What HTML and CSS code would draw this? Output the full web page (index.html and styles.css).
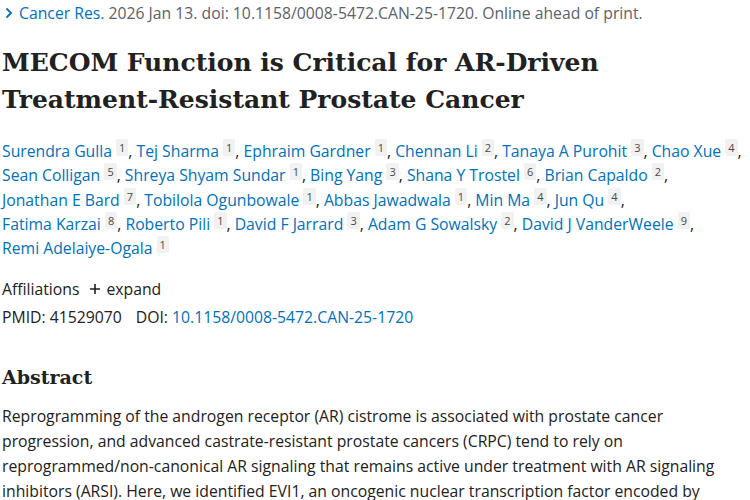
FILE: index.html
```html
<!DOCTYPE html>
<html>
<head>
<meta charset="utf-8">
<link rel="stylesheet" href="styles.css">
</head>
<body>
<main class="article">
  <div class="citation">
    <svg class="chev" width="10" height="12" viewBox="0 0 10 12"><path d="M2.5 1.5 L7 6 L2.5 10.5" fill="none" stroke="#0071bc" stroke-width="1.8"/></svg>
    <a class="journal" href="#">Cancer Res.</a>
    <span class="cit">2026 Jan 13. doi: 10.1158/0008-5472.CAN-25-1720. Online ahead of print.</span>
  </div>
  <h1 class="title">MECOM Function is Critical for AR-Driven Treatment-Resistant Prostate Cancer</h1>
  <div class="authors">
    <span class="author"><a href="#">Surendra Gulla</a> <sup class="aff">1</sup>,</span>
    <span class="author"><a href="#">Tej Sharma</a> <sup class="aff">1</sup>,</span>
    <span class="author"><a href="#">Ephraim Gardner</a> <sup class="aff">1</sup>,</span>
    <span class="author"><a href="#">Chennan Li</a> <sup class="aff">2</sup>,</span>
    <span class="author"><a href="#">Tanaya A Purohit</a> <sup class="aff">3</sup>,</span>
    <span class="author"><a href="#">Chao Xue</a> <sup class="aff">4</sup>,</span><br>
    <span class="author"><a href="#">Sean Colligan</a> <sup class="aff">5</sup>,</span>
    <span class="author"><a href="#">Shreya Shyam Sundar</a> <sup class="aff">1</sup>,</span>
    <span class="author"><a href="#">Bing Yang</a> <sup class="aff">3</sup>,</span>
    <span class="author"><a href="#">Shana Y Trostel</a> <sup class="aff">6</sup>,</span>
    <span class="author"><a href="#">Brian Capaldo</a> <sup class="aff">2</sup>,</span><br>
    <span class="author"><a href="#">Jonathan E Bard</a> <sup class="aff">7</sup>,</span>
    <span class="author"><a href="#">Tobilola Ogunbowale</a> <sup class="aff">1</sup>,</span>
    <span class="author"><a href="#">Abbas Jawadwala</a> <sup class="aff">1</sup>,</span>
    <span class="author"><a href="#">Min Ma</a> <sup class="aff">4</sup>,</span>
    <span class="author"><a href="#">Jun Qu</a> <sup class="aff">4</sup>,</span><br>
    <span class="author"><a href="#">Fatima Karzai</a> <sup class="aff">8</sup>,</span>
    <span class="author"><a href="#">Roberto Pili</a> <sup class="aff">1</sup>,</span>
    <span class="author"><a href="#">David F Jarrard</a> <sup class="aff">3</sup>,</span>
    <span class="author"><a href="#">Adam G Sowalsky</a> <sup class="aff">2</sup>,</span>
    <span class="author"><a href="#">David J VanderWeele</a> <sup class="aff">9</sup>,</span><br>
    <span class="author"><a href="#">Remi Adelaiye-Ogala</a> <sup class="aff">1</sup></span>
  </div>
  <div class="affiliations">
    <span>Affiliations</span>
    <span class="expand"><svg width="12" height="12" viewBox="0 0 12 12"><path d="M6 1V11M1 6H11" stroke="#212121" stroke-width="1.6"/></svg> expand</span>
  </div>
  <div class="ids">
    <span>PMID: 41529070</span>
    <span class="doi">DOI: <a href="#">10.1158/0008-5472.CAN-25-1720</a></span>
  </div>
  <h2 class="abstract-title">Abstract</h2>
  <p class="abstract">Reprogramming of the androgen receptor (AR) cistrome is associated with prostate cancer progression, and advanced castrate-resistant prostate cancers (CRPC) tend to rely on reprogrammed/non-canonical AR signaling that remains active under treatment with AR signaling inhibitors (ARSI). Here, we identified EVI1, an oncogenic nuclear transcription factor encoded by MECOM, as a key regulator of AR signaling in treatment-resistant prostate cancer.</p>
</main>
</body>
</html>
```

FILE: styles.css
```css
html, body {
  margin: 0;
  padding: 0;
  background: #ffffff;
  overflow: hidden;
}
body {
  font-family: "Open Sans", "Noto Sans", sans-serif;
  color: #212121;
  font-size: 15.75px;
}
a {
  color: #0071bc;
  text-decoration: none;
}
.article {
  width: 745px;
  padding: 3px 0 0 2px;
}
.citation {
  display: flex;
  align-items: center;
  gap: 5px;
  color: #5b616b;
  line-height: 20px;
  white-space: nowrap;
}
.chev {
  margin-left: 2px;
}
.citation .journal { margin-right: -1px; }
.title {
  font-family: "DejaVu Serif", serif;
  font-weight: bold;
  font-size: 25px;
  line-height: 37px;
  color: #212121;
  margin: 21px 0 21px 0;
  width: 640px;
}
.authors {
  line-height: 24.3px;
  white-space: nowrap;
}
.aff {
  font-size: 11px;
  line-height: 1;
  vertical-align: 5px;
  background: #f1f1f1;
  color: #4a4a4a;
  padding: 1px 3px;
  border-radius: 2px;
}
.affiliations {
  margin-top: 17px;
  line-height: 24px;
  display: flex;
  gap: 10px;
}
.expand {
  display: inline-flex;
  align-items: center;
  gap: 5px;
}
.ids {
  line-height: 24px;
  margin-top: 4px;
  display: flex;
  gap: 14px;
}
.abstract-title {
  font-family: "DejaVu Serif", serif;
  font-weight: bold;
  font-size: 19px;
  line-height: 30px;
  margin: 33px 0 0 0;
}
.abstract {
  margin: 12px 0 0 0;
  line-height: 25px;
  width: 732px;
}
```
